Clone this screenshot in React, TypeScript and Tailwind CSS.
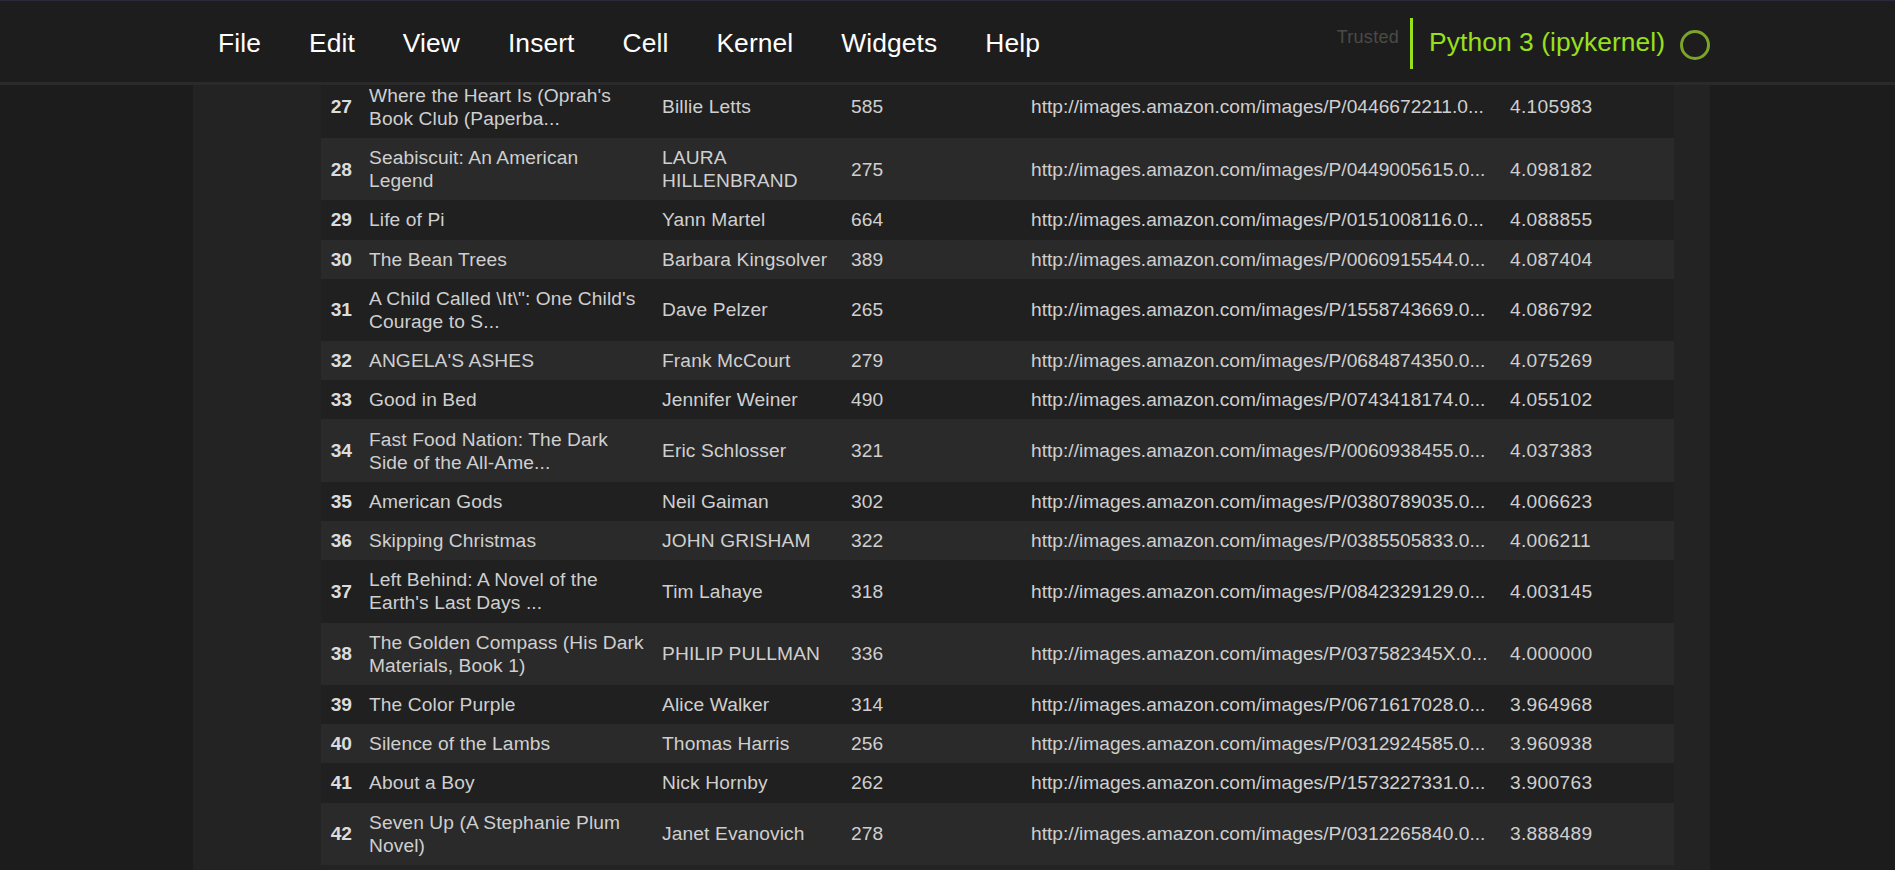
const rows: [number, string, string, string, string, string][] = [
  [27, "Where the Heart Is (Oprah's Book Club (Paperba...", "Billie Letts", "585", "0446672211", "4.105983"],
  [28, "Seabiscuit: An American Legend", "LAURA HILLENBRAND", "275", "0449005615", "4.098182"],
  [29, "Life of Pi", "Yann Martel", "664", "0151008116", "4.088855"],
  [30, "The Bean Trees", "Barbara Kingsolver", "389", "0060915544", "4.087404"],
  [31, "A Child Called \\It\\\": One Child's Courage to S...", "Dave Pelzer", "265", "1558743669", "4.086792"],
  [32, "ANGELA'S ASHES", "Frank McCourt", "279", "0684874350", "4.075269"],
  [33, "Good in Bed", "Jennifer Weiner", "490", "0743418174", "4.055102"],
  [34, "Fast Food Nation: The Dark Side of the All-Ame...", "Eric Schlosser", "321", "0060938455", "4.037383"],
  [35, "American Gods", "Neil Gaiman", "302", "0380789035", "4.006623"],
  [36, "Skipping Christmas", "JOHN GRISHAM", "322", "0385505833", "4.006211"],
  [37, "Left Behind: A Novel of the Earth's Last Days ...", "Tim Lahaye", "318", "0842329129", "4.003145"],
  [38, "The Golden Compass (His Dark Materials, Book 1)", "PHILIP PULLMAN", "336", "037582345X", "4.000000"],
  [39, "The Color Purple", "Alice Walker", "314", "0671617028", "3.964968"],
  [40, "Silence of the Lambs", "Thomas Harris", "256", "0312924585", "3.960938"],
  [41, "About a Boy", "Nick Hornby", "262", "1573227331", "3.900763"],
  [42, "Seven Up (A Stephanie Plum Novel)", "Janet Evanovich", "278", "0312265840", "3.888489"],
];

const menu = ["File", "Edit", "View", "Insert", "Cell", "Kernel", "Widgets", "Help"];

export default function App() {
  return (
    <div className="h-[870px] overflow-hidden bg-[#1c1c1c] font-['Liberation_Sans',Arial,sans-serif]">
      <header className="h-[85px] border-t border-b-[3px] border-t-[#2a2b3a] border-b-[#2a2a2a] bg-[#1d1d1d]">
        <div className="ml-[193px] flex h-full w-[1517px] items-center justify-between">
          <nav className="ml-[1px] flex text-[26.4px] leading-[30px] tracking-[0.1px] text-white">
            {menu.map((m) => (
              <a key={m} className="px-6 pt-[2px]">
                {m}
              </a>
            ))}
          </nav>
          <div className="flex items-center">
            <span className="mb-[9px] text-[18px] leading-[21px] tracking-[0.3px] text-[#4b4b45]">Trusted</span>
            <span className="ml-[11px] mt-[3px] h-[51px] w-[3px] bg-[#98e01c]" />
            <span className="ml-[16px] mt-[1px] text-[26.4px] leading-[30px] tracking-[0.06px] text-[#98e01c]">Python 3 (ipykernel)</span>
            <span className="ml-[15px] mt-[7px] h-[30px] w-[30px] rounded-full border-[3px] border-[#7ba428]" />
          </div>
        </div>
      </header>
      <main className="ml-[193px] h-[785px] w-[1517px] overflow-hidden bg-[#232323] pl-[128px]">
        <table className="-mt-[9.3px] w-[1353px] table-fixed border-collapse text-[19.2px] leading-[23.04px] text-[#cfcfcf]">
          <colgroup>
            <col className="w-[40px]" />
            <col className="w-[293px]" />
            <col className="w-[189px]" />
            <col className="w-[180px]" />
            <col className="w-[479px]" />
            <col className="w-[172px]" />
          </colgroup>
          <tbody>
            {rows.map(([n, title, author, pages, isbn, rating]) => (
              <tr key={n} className="odd:bg-[#202020] even:bg-[#2a2a2a]">
                <th className="py-[8.1px] pr-[9px] text-right font-bold text-[#dcdcdc]">{n}</th>
                <td className="px-2 py-[8.1px] tracking-[0.1px]">{title}</td>
                <td className="px-2 py-[8.1px] tracking-[0.12px]">{author}</td>
                <td className="px-2 py-[8.1px] tracking-[0.1px]">{pages}</td>
                <td className="px-2 py-[8.1px] whitespace-nowrap">{`http://images.amazon.com/images/P/${isbn}.0...`}</td>
                <td className="px-2 py-[8.1px] tracking-[0.3px]">{rating}</td>
              </tr>
            ))}
          </tbody>
        </table>
      </main>
    </div>
  );
}
